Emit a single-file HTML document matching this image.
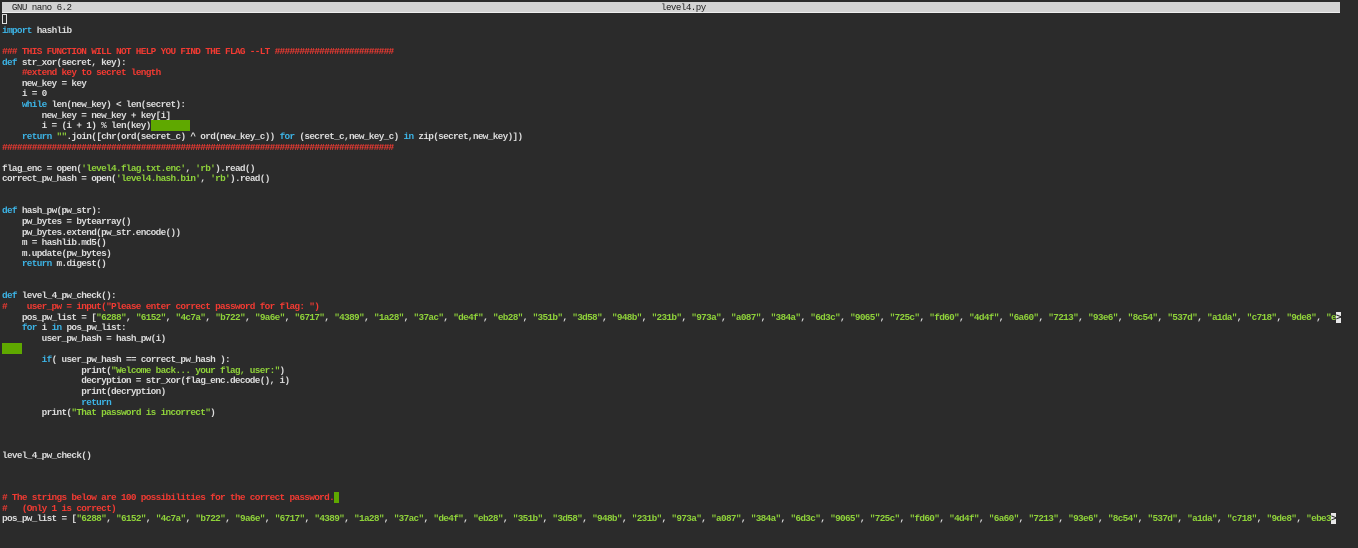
<!DOCTYPE html>
<html><head><meta charset="utf-8"><style>
html,body{margin:0;padding:0;background:#2b2b2b;width:1358px;height:548px;overflow:hidden}
.t{position:absolute;left:2px;top:2px;width:1338px;height:10px;background:#d3d3d3;border-bottom:1px solid #eee;font:9.2px/11px "Liberation Mono",monospace;letter-spacing:-0.55px;color:#222;white-space:pre}
pre{position:absolute;left:2px;top:14px;margin:0;font:bold 9.4px/10.62px "Liberation Mono",monospace;letter-spacing:-0.67px;color:#dcdcdc;white-space:pre;width:1340px;overflow:hidden}
.k{color:#3cb4e6}.c{color:#f23a32}.s{color:#8fd23a}
.g{background:#5fa800}
.cur{display:inline-block;width:5px;height:10px;border:1px solid #ddd;box-sizing:border-box;vertical-align:-2px;margin-right:-0.67px}
.m{background:#e8e8e8;color:#222}
</style></head><body>
<div class="t">  GNU nano 6.2</div>
<div class="t" style="left:661px;width:auto;background:none;border:0">level4.py</div>
<pre><span class="cur"></span>
<span class="k">import</span> hashlib

<span class="c">### THIS FUNCTION WILL NOT HELP YOU FIND THE FLAG --LT ########################</span>
<span class="k">def</span> str_xor(secret, key):
    <span class="c">#extend key to secret length</span>
    new_key = key
    i = 0
    <span class="k">while</span> len(new_key) &lt; len(secret):
        new_key = new_key + key[i]
        i = (i + 1) % len(key)<span class="g">        </span>
    <span class="k">return</span> <span class="s">""</span>.join([chr(ord(secret_c) ^ ord(new_key_c)) <span class="k">for</span> (secret_c,new_key_c) <span class="k">in</span> zip(secret,new_key)])
<span class="c">###############################################################################</span>

flag_enc = open(<span class="s">'level4.flag.txt.enc'</span>, <span class="s">'rb'</span>).read()
correct_pw_hash = open(<span class="s">'level4.hash.bin'</span>, <span class="s">'rb'</span>).read()


<span class="k">def</span> hash_pw(pw_str):
    pw_bytes = bytearray()
    pw_bytes.extend(pw_str.encode())
    m = hashlib.md5()
    m.update(pw_bytes)
    <span class="k">return</span> m.digest()


<span class="k">def</span> level_4_pw_check():
<span class="c">#    user_pw = input("Please enter correct password for flag: ")</span>
    pos_pw_list = [<span class="s">"6288"</span>, <span class="s">"6152"</span>, <span class="s">"4c7a"</span>, <span class="s">"b722"</span>, <span class="s">"9a6e"</span>, <span class="s">"6717"</span>, <span class="s">"4389"</span>, <span class="s">"1a28"</span>, <span class="s">"37ac"</span>, <span class="s">"de4f"</span>, <span class="s">"eb28"</span>, <span class="s">"351b"</span>, <span class="s">"3d58"</span>, <span class="s">"948b"</span>, <span class="s">"231b"</span>, <span class="s">"973a"</span>, <span class="s">"a087"</span>, <span class="s">"384a"</span>, <span class="s">"6d3c"</span>, <span class="s">"9065"</span>, <span class="s">"725c"</span>, <span class="s">"fd60"</span>, <span class="s">"4d4f"</span>, <span class="s">"6a60"</span>, <span class="s">"7213"</span>, <span class="s">"93e6"</span>, <span class="s">"8c54"</span>, <span class="s">"537d"</span>, <span class="s">"a1da"</span>, <span class="s">"c718"</span>, <span class="s">"9de8"</span>, <span class="s">"e</span><span class="m">&gt;</span>
    <span class="k">for</span> i <span class="k">in</span> pos_pw_list:
        user_pw_hash = hash_pw(i)
<span class="g">    </span>
        <span class="k">if</span>( user_pw_hash == correct_pw_hash ):
                print(<span class="s">"Welcome back... your flag, user:"</span>)
                decryption = str_xor(flag_enc.decode(), i)
                print(decryption)
                <span class="k">return</span>
        print(<span class="s">"That password is incorrect"</span>)



level_4_pw_check()



<span class="c"># The strings below are 100 possibilities for the correct password.</span><span class="g"> </span>
<span class="c">#   (Only 1 is correct)</span>
pos_pw_list = [<span class="s">"6288"</span>, <span class="s">"6152"</span>, <span class="s">"4c7a"</span>, <span class="s">"b722"</span>, <span class="s">"9a6e"</span>, <span class="s">"6717"</span>, <span class="s">"4389"</span>, <span class="s">"1a28"</span>, <span class="s">"37ac"</span>, <span class="s">"de4f"</span>, <span class="s">"eb28"</span>, <span class="s">"351b"</span>, <span class="s">"3d58"</span>, <span class="s">"948b"</span>, <span class="s">"231b"</span>, <span class="s">"973a"</span>, <span class="s">"a087"</span>, <span class="s">"384a"</span>, <span class="s">"6d3c"</span>, <span class="s">"9065"</span>, <span class="s">"725c"</span>, <span class="s">"fd60"</span>, <span class="s">"4d4f"</span>, <span class="s">"6a60"</span>, <span class="s">"7213"</span>, <span class="s">"93e6"</span>, <span class="s">"8c54"</span>, <span class="s">"537d"</span>, <span class="s">"a1da"</span>, <span class="s">"c718"</span>, <span class="s">"9de8"</span>, <span class="s">"ebe3</span><span class="m">&gt;</span>
</pre>
</body></html>
